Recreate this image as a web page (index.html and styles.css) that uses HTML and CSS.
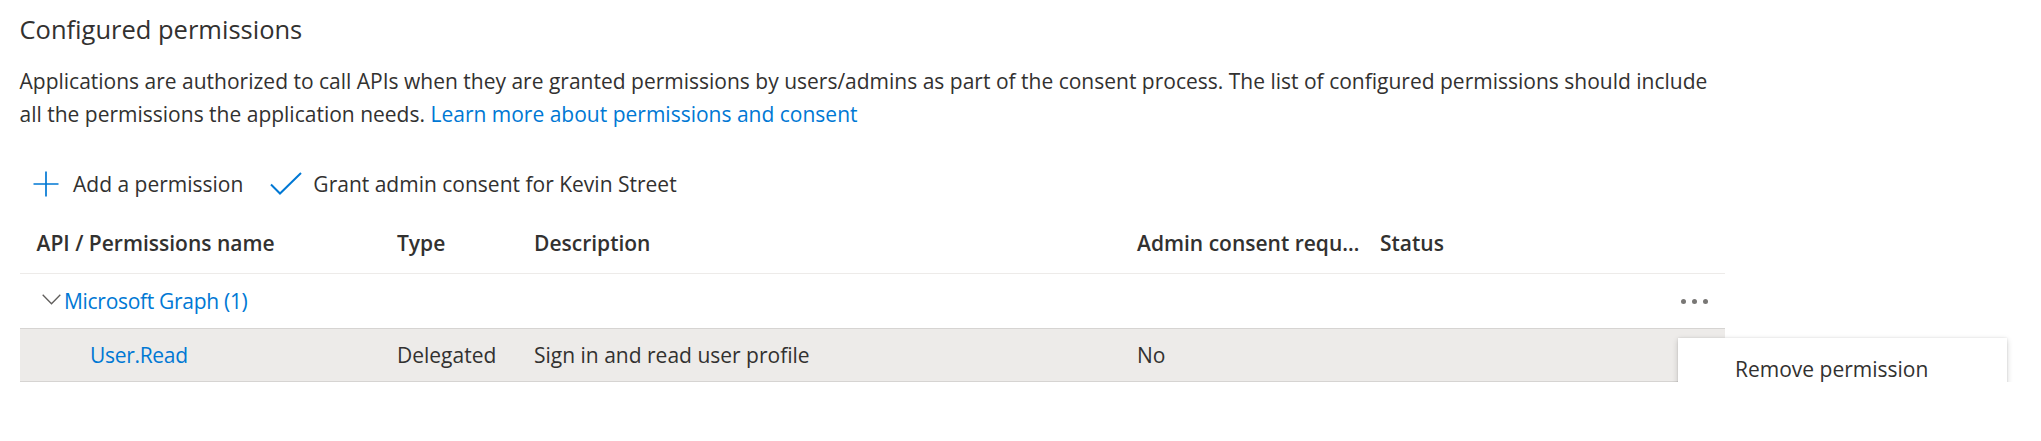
FILE: index.html
```html
<!DOCTYPE html>
<html lang="en">
<head>
<meta charset="utf-8">
<title>Configured permissions</title>
<link rel="stylesheet" href="styles.css">
</head>
<body>
<div class="page">
  <h2 class="title">Configured permissions</h2>
  <p class="intro">Applications are authorized to call APIs when they are granted permissions by users/admins as part of the consent process. The list of configured permissions should include all the permissions the application needs. <a class="link intro-link" href="#">Learn more about permissions and consent</a></p>

  <div class="toolbar">
    <button class="tool tool-add" type="button">
      <svg class="icon-plus" width="26" height="26" viewBox="0 0 26 26" aria-hidden="true"><path d="M13 0.5V25.5M0.5 13H25.5" fill="none" stroke="#0078d4" stroke-width="1.7"/></svg>
      <span>Add a permission</span>
    </button>
    <button class="tool tool-grant" type="button">
      <svg class="icon-check" width="32" height="24" viewBox="0 0 32 24" aria-hidden="true"><path d="M1 12.5L10 21.5L31 1" fill="none" stroke="#0078d4" stroke-width="2"/></svg>
      <span>Grant admin consent for Kevin Street</span>
    </button>
  </div>

  <div class="table">
    <div class="row head">
      <div class="cell">API / Permissions name</div>
      <div class="cell">Type</div>
      <div class="cell">Description</div>
      <div class="cell">Admin consent requ…</div>
      <div class="cell">Status</div>
    </div>
    <div class="row group">
      <div class="group-name">
        <svg class="chev" width="19" height="11" viewBox="0 0 19 11" aria-hidden="true"><path d="M0.7 0.7L9.5 9.8L18.3 0.7" fill="none" stroke="#605e5c" stroke-width="1.3"/></svg>
        <a class="link" href="#">Microsoft Graph (1)</a>
      </div>
      <div class="more" aria-label="More actions"><span></span><span></span><span></span></div>
    </div>
    <div class="row item selected">
      <div class="cell cell-name"><a class="link" href="#">User.Read</a></div>
      <div class="cell">Delegated</div>
      <div class="cell">Sign in and read user profile</div>
      <div class="cell">No</div>
      <div class="cell"></div>
    </div>
    <div class="menu">
      <div class="menu-item">Remove permission</div>
    </div>
  </div>
</div>
</body>
</html>
```

FILE: styles.css
```css
* { box-sizing: border-box; }

html, body {
  margin: 0;
  padding: 0;
  background: #ffffff;
}

body {
  font-family: "Open Sans", "Noto Sans", "Liberation Sans", sans-serif;
  color: #323130;
  font-size: 21px;
}

.page {
  padding-left: 19.5px;
  width: 2041px;
}

.title {
  margin: 12px 0 0;
  font-size: 25.5px;
  font-weight: 400;
  line-height: 34px;
  color: #323130;
}

.intro {
  margin: 19px 0 0;
  line-height: 32.5px;
  max-width: 1690px;
}

.link {
  color: #0078d4;
  text-decoration: none;
}

.intro-link {
  display: inline-block;
  line-height: 28px;
  vertical-align: baseline;
}

.toolbar {
  margin-top: 32px;
  height: 44px;
  display: flex;
  align-items: center;
  padding-left: 13.5px;
}

.tool {
  display: flex;
  align-items: center;
  border: 0;
  background: transparent;
  padding: 0;
  font: inherit;
  color: #323130;
}

.tool-add { gap: 14px; margin-right: 27px; }
.tool-grant { gap: 11px; }

.table {
  position: relative;
  margin-top: 7px;
  width: 1705.5px;
}

.row {
  display: grid;
  grid-template-columns: 360.5px 137px 603px 243px 1fr;
  align-items: center;
}

.cell {
  padding-left: 17px;
  white-space: nowrap;
  overflow: hidden;
}

.head {
  height: 61px;
  border-bottom: 1px solid #edebe9;
  font-weight: 600;
}

.group {
  height: 54px;
  display: flex;
  justify-content: space-between;
  align-items: center;
}

.group-name {
  display: flex;
  align-items: center;
  gap: 3px;
  padding-left: 22.5px;
  letter-spacing: -0.3px;
}

.chev { display: block; margin-top: -4px; }

.more {
  display: flex;
  gap: 6px;
  margin-right: 17px;
}

.more span {
  width: 5px;
  height: 5px;
  border-radius: 50%;
  background: #797775;
}

.item {
  height: 54px;
  border-top: 1px solid #d6d4d2;
  border-bottom: 1px solid #d6d4d2;
}

.selected { background: #edebe9; }

.cell-name { padding-left: 70.5px; letter-spacing: -0.3px; }

.menu {
  position: absolute;
  left: 1658.5px;
  top: 125px;
  width: 329px;
  height: 62px;
  background: #ffffff;
  box-shadow: 0 2px 6px rgba(0, 0, 0, 0.18), 0 0 2px rgba(0, 0, 0, 0.1);
  display: flex;
  align-items: center;
}

.menu-item {
  padding-left: 57px;
  color: #323130;
}
```
